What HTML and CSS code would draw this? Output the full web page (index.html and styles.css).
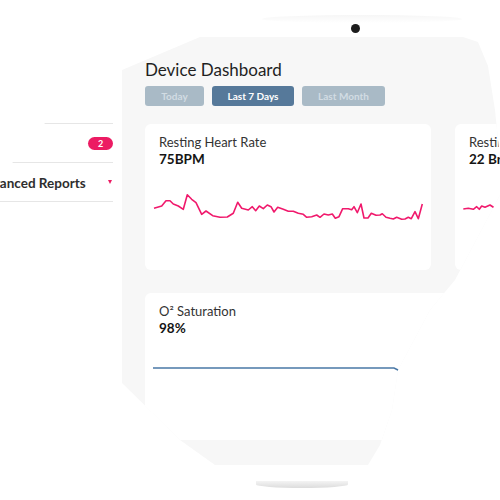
FILE: index.html
```html
<!DOCTYPE html>
<html lang="en">
<head>
<meta charset="utf-8">
<title>Device Dashboard</title>
<link rel="stylesheet" href="styles.css">
</head>
<body>
<div class="scene">
  <aside class="sidebar">
    <div class="nav-item first">
      <span class="nav-label"></span>
      <span class="badge">2</span>
    </div>
    <div class="nav-item">
      <span class="nav-label strong">Advanced Reports</span>
      <span class="caret"></span>
    </div>
  </aside>

  <main class="screen">
    <h1 class="title">Device Dashboard</h1>
    <div class="tabs">
      <button class="tab tab-today">Today</button>
      <button class="tab tab-week active">Last 7 Days</button>
      <button class="tab tab-month">Last Month</button>
    </div>
    <div class="cards">
      <section class="card">
        <div class="card-head">
          <div class="card-title">Resting Heart Rate</div>
          <div class="card-value">75BPM</div>
        </div>
        <svg class="spark" width="286" height="45" viewBox="145 184 286 45">
          <polyline fill="none" stroke="#f0196c" stroke-width="1.6" stroke-linejoin="round" points="154,208.3 161.7,206 166,200.7 170,200.7 173.3,204 178.3,206 183.3,209.3 187.3,194.7 191.7,199.3 196,202.7 201.7,214.3 206,211 212.7,215.7 220,217.3 227.3,217 233.3,213.3 237.7,202.3 241.7,208.3 248.3,210 252.3,206.7 255.7,210.7 259.3,206 263.3,208.7 267.3,205 271,206.7 274,212 277.7,207.3 283.3,209.3 288.3,211.3 293.3,211.3 298.3,213.3 303.3,214.3 306.7,217.3 311.7,216.7 316.7,215 320,217.3 324,214 328.3,215 332.3,214 335.3,218.3 339,216.7 342.7,208.7 348.3,208.7 351.7,209.7 354,206.7 357.3,212.7 361,204 364,218 368,218 371.3,213.3 376,215.3 380,215 382.3,213.7 386,217.3 390,218.3 393.3,219 396.7,217.3 401.7,219.3 405,219 408.3,217.3 411.3,218.7 415,211.7 418.3,218.7 422.3,204"/>
        </svg>
      </section>
      <section class="card">
        <div class="card-head">
          <div class="card-title">Resting Respiratory Rate</div>
          <div class="card-value">22 Breaths/min</div>
        </div>
        <svg class="spark" width="286" height="45" viewBox="455 184 286 45">
          <polyline fill="none" stroke="#f0196c" stroke-width="1.6" stroke-linejoin="round" points="463.3,209 468.3,208.3 473.3,209.3 476.7,206.7 479.3,209.3 481.7,206 485,207.3 490,205 496,209 502,207"/>
        </svg>
      </section>
      <section class="card wide">
        <div class="card-head">
          <div class="card-title">O² Saturation</div>
          <div class="card-value">98%</div>
        </div>
        <svg class="spark flat" width="300" height="20" viewBox="145 360 300 20">
          <polyline fill="none" stroke="#4a78a6" stroke-width="1.6" points="153,368 394,368 400,371"/>
        </svg>
      </section>
    </div>
  </main>

  <span class="bezel-top"></span>
  <span class="camera"></span>
  <span class="foot-shadow"></span>
</div>
</body>
</html>
```

FILE: styles.css
```css
* { box-sizing: border-box; }

html, body {
  margin: 0;
  padding: 0;
  background: #ffffff;
  font-family: Lato, "Open Sans", "Liberation Sans", sans-serif;
  overflow: hidden;
}

.scene {
  position: relative;
  width: 500px;
  height: 500px;
  display: flex;
  align-items: flex-start;
  background: #ffffff;
  overflow: hidden;
}

/* ---------- sidebar ---------- */
.sidebar {
  flex-shrink: 0;
  width: 153px;
  margin-left: -40px;
  margin-right: 9px;
  padding-top: 123px;
  background: #ffffff;
  clip-path: polygon(100px 0, 153px 0, 153px 500px, 40px 500px, 40px 178px, 53px 162px, 85px 123px, 100px 104px);
}

.nav-item {
  height: 39px;
  display: flex;
  align-items: center;
  justify-content: space-between;
  padding-left: 16px;
  border-bottom: 1px solid #e6e6e6;
}

.nav-item.first {
  height: 40px;
  border-top: 1px solid #e6e6e6;
}

.nav-label {
  font-size: 13.5px;
  color: #333;
}

.nav-label.strong {
  font-weight: 700;
  color: #2e2e2e;
  margin-top: 1px;
}

.badge {
  width: 25px;
  height: 13px;
  border-radius: 7px;
  background: #ec1b63;
  color: #fff;
  font-size: 9px;
  font-weight: 700;
  line-height: 13px;
  text-align: center;
}

.caret {
  width: 0;
  height: 0;
  margin-right: 1px;
  border-left: 2.5px solid transparent;
  border-right: 2.5px solid transparent;
  border-top: 4px solid #ec1b63;
}

/* ---------- screen ---------- */
.screen {
  flex-shrink: 0;
  width: 400px;
  height: 430px;
  margin-top: 36px;
  padding: 23px 0 0 23px;
  background: #f7f7f7;
  clip-path: polygon(0 34px, 78px 1px, 341px 1px, 356px 6px, 366px 30px, 373px 74px, 378px 124px, 378px 159px, 333px 244px, 308px 274px, 276px 334px, 270px 374px, 258px 409px, 246px 429px, 93px 429px, 58px 404px, 0 347px);
}

.title {
  margin: 0;
  font-size: 17px;
  line-height: 22px;
  font-weight: 400;
  color: #1f1f1f;
  white-space: nowrap;
}

.tabs {
  display: flex;
  gap: 8px;
  margin-top: 5px;
}

.tab {
  height: 20px;
  padding: 0;
  border: 0;
  border-radius: 3px;
  background: #a9bac6;
  color: #d2dce3;
  font-family: inherit;
  font-size: 10px;
  font-weight: 700;
}

.tab-today { width: 59px; }
.tab-week { width: 82px; }
.tab-month { width: 83px; }

.tab.active {
  background: #56799a;
  color: #ffffff;
}

.cards {
  display: grid;
  grid-template-columns: 286px 286px;
  grid-template-rows: 146px 147px;
  column-gap: 24px;
  row-gap: 23px;
  margin-top: 18px;
  width: max-content;
}

.card {
  background: #ffffff;
  border-radius: 6px;
  overflow: hidden;
}

.card.wide {
  grid-column: 1 / 3;
}

.card-head {
  padding: 10px 14px 0;
}

.card-title {
  font-size: 13px;
  line-height: 16px;
  color: #333;
  white-space: nowrap;
}

.card-value {
  font-size: 13.5px;
  line-height: 18px;
  font-weight: 700;
  color: #151515;
  white-space: nowrap;
}

.spark {
  display: block;
  margin-top: 16px;
}

.spark.flat {
  margin-top: 23px;
}

/* ---------- device details ---------- */
.bezel-top {
  position: absolute;
  left: 262px;
  top: 15px;
  width: 200px;
  height: 8px;
  border-radius: 50%;
  background: linear-gradient(#f6f6f6, #ffffff);
}

.camera {
  position: absolute;
  left: 351px;
  top: 24px;
  width: 9px;
  height: 9px;
  border-radius: 50%;
  background: #1c1c1c;
}

.foot-shadow {
  position: absolute;
  left: 256px;
  top: 481px;
  width: 92px;
  height: 7px;
  border-radius: 0 0 50% 50%;
  background: linear-gradient(#f4f4f4, #dcdcdc);
}
```
